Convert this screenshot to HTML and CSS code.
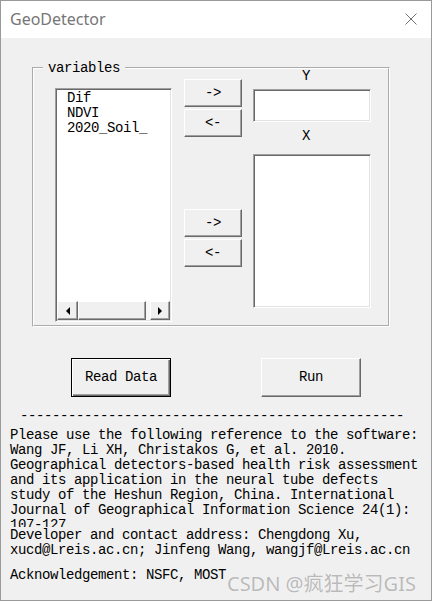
FILE: index.html
```html
<!DOCTYPE html>
<html lang="en">
<head>
  <meta charset="UTF-8">
  <title>GeoDetector</title>
  <link rel="stylesheet" href="styles.css">
</head>
<body>
  <div class="window">
    <div class="titlebar">
      <span class="title">GeoDetector</span>
      <svg class="close" width="12" height="12" viewBox="0 0 12 12">
        <path d="M0.5 0.5 L11.5 11.5 M11.5 0.5 L0.5 11.5" stroke="#707070" stroke-width="1" fill="none"/>
      </svg>
    </div>

    <div class="client">
      <fieldset class="group">
        <legend>variables</legend>
        <div class="group-body">
          <!-- variable list -->
          <div class="sunken listbox">
            <ul class="items">
              <li>Dif</li>
              <li>NDVI</li>
              <li>2020_Soil_</li>
            </ul>
            <div class="hscroll">
              <span class="sb-btn sb-left">
                <svg width="4" height="8" viewBox="0 0 4 8"><polygon points="4,0 4,8 0,4" fill="#000"/></svg>
              </span>
              <span class="sb-thumb"></span>
              <span class="sb-track"></span>
              <span class="sb-btn sb-right">
                <svg width="4" height="8" viewBox="0 0 4 8"><polygon points="0,0 0,8 4,4" fill="#000"/></svg>
              </span>
            </div>
          </div>

          <!-- move buttons -->
          <div class="movers">
            <div class="pair">
              <button class="btn move">-&gt;</button>
              <button class="btn move">&lt;-</button>
            </div>
            <div class="pair pair-x">
              <button class="btn move">-&gt;</button>
              <button class="btn move">&lt;-</button>
            </div>
          </div>

          <!-- targets -->
          <div class="targets">
            <div class="cap">Y</div>
            <div class="sunken ybox"></div>
            <div class="cap cap-x">X</div>
            <div class="sunken xbox"></div>
          </div>
        </div>
      </fieldset>

      <div class="actions">
        <button class="btn big default">Read Data</button>
        <button class="btn big run">Run</button>
      </div>

      <div class="rule">------------------------------------------------</div>

      <p class="ref">Please use the following reference to the software: Wang JF, Li XH, Christakos G, et al. 2010. Geographical detectors-based health risk assessment and its application in the neural tube defects study of the Heshun Region, China. International Journal of Geographical Information Science 24(1): 107-127</p>
      <p class="contact">Developer and contact address: Chengdong Xu, xucd@Lreis.ac.cn; Jinfeng Wang, wangjf@Lreis.ac.cn</p>
      <p class="ack">Acknowledgement: NSFC, MOST</p>
    </div>

    <div class="watermark">CSDN @疯狂学习GIS</div>
  </div>
</body>
</html>
```

FILE: styles.css
```css
/* page + window frame */
body {
  margin: 0;
  background: #fff;
}
.window {
  position: relative;
  box-sizing: border-box;
  width: 432px;
  height: 601px;
  border: 1px solid #9a9a9a;
  background: #f0f0f0;
  display: flex;
  flex-direction: column;
  overflow: hidden;
  font-family: "Liberation Mono", monospace;
  font-size: 14px;
  letter-spacing: -0.4px;
  line-height: 15px;
  color: #000;
}

/* title bar */
.titlebar {
  height: 37px;
  flex: none;
  background: #fff;
  display: flex;
  align-items: center;
  justify-content: space-between;
  padding: 0 14px 0 9px;
}
.title {
  font-family: "Noto Sans", sans-serif;
  font-size: 16px;
  letter-spacing: 0;
  color: #767676;
}
.close { display: block; margin-top: -1px; }

/* client area */
.client {
  flex: 1;
  display: flex;
  flex-direction: column;
}

/* group box */
.group {
  width: 358px;
  box-sizing: border-box;
  margin: 22px 0 0 31px;
  padding: 0;
  border: 2px groove #fff;
  min-inline-size: 0;
}
.group legend {
  margin-left: 9px;
  padding: 0 5px;
  line-height: 16px;
}
.group-body {
  display: flex;
  align-items: flex-start;
  padding: 0 0 3px 21px;
}

/* sunken controls */
.sunken {
  box-sizing: border-box;
  background: #fff;
  border: 1px solid;
  border-color: #a0a0a0 #fff #fff #a0a0a0;
  box-shadow: inset 1px 1px 0 #696969, inset -1px -1px 0 #e3e3e3;
}
.listbox {
  width: 117px;
  height: 234px;
  margin-top: 12px;
  padding: 2px 1px 1px;
  display: flex;
  flex-direction: column;
}
.items {
  flex: 1;
  list-style: none;
  margin: 0;
  padding: 0 0 0 10px;
}

/* horizontal scroll bar */
.hscroll {
  height: 19px;
  display: flex;
}
.sb-btn, .sb-thumb {
  box-sizing: border-box;
  background: #f0f0f0;
  border: 1px solid;
  border-color: #fff #696969 #696969 #fff;
  box-shadow: inset -1px -1px 0 #a0a0a0;
}
.sb-btn {
  display: flex;
  align-items: center;
  justify-content: center;
}
.sb-left { width: 21px; }
.sb-thumb { width: 68px; }
.sb-track { width: 4px; background: #f7f7f7; }
.sb-right { width: 20px; }

/* buttons */
.btn {
  box-sizing: border-box;
  margin: 0;
  padding: 0;
  font: inherit;
  letter-spacing: inherit;
  color: #000;
  background: #f0f0f0;
  border: 1px solid;
  border-color: #fff #696969 #696969 #fff;
  box-shadow: inset -1px -1px 0 #a0a0a0;
  border-radius: 0;
}
.movers {
  display: flex;
  flex-direction: column;
  margin-left: 12px;
}
.pair {
  display: flex;
  flex-direction: column;
  gap: 2px;
  margin-top: 3px;
}
.pair-x { margin-top: 72px; }
.move {
  width: 58px;
  height: 28px;
}

/* Y / X targets */
.targets {
  width: 118px;
  margin: -7px 0 0 11px;
  display: flex;
  flex-direction: column;
}
.cap { padding-left: 49px; }
.ybox { height: 33px; margin-top: 5px; }
.cap-x { margin-top: 7px; }
.xbox { height: 154px; margin-top: 10px; }

/* bottom buttons */
.actions {
  display: flex;
  margin: 31px 0 0 70px;
}
.big {
  width: 100px;
  height: 39px;
}
.default {
  border: 1px solid #000;
  box-shadow: inset 1px 1px 0 #fff, inset -1px -1px 0 #696969, inset -2px -2px 0 #a0a0a0;
}
.run { margin-left: 90px; }

/* notes */
.rule {
  margin: 12px 0 0 19px;
  white-space: nowrap;
}
.ref, .contact, .ack {
  margin: 0;
  padding: 1px 0 0 9px;
  width: 412px;
}
.ref {
  margin-top: 3px;
  height: 99px;
  overflow: hidden;
}
.ack { margin-top: 9px; }

/* screenshot watermark */
.watermark {
  position: absolute;
  left: 226px;
  top: 570px;
  font-family: "Noto Sans", "Noto Sans CJK SC", sans-serif;
  font-size: 20px;
  letter-spacing: 0;
  line-height: 26px;
  color: rgba(140, 140, 140, 0.6);
  text-shadow: 0 0 1px #fff;
}
```
